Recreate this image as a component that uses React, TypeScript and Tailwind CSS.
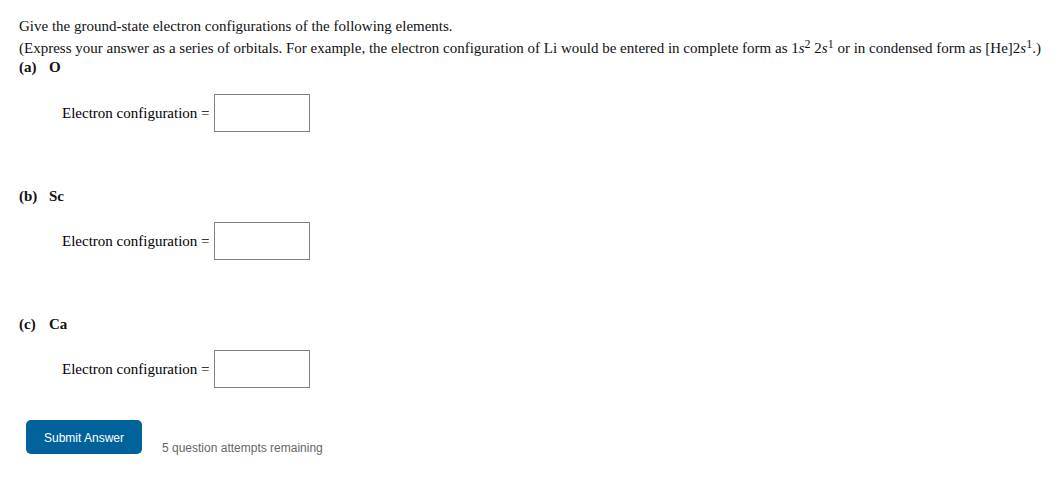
import React from "react";

const serif = { fontFamily: '"Liberation Serif", "Times New Roman", serif' };

function Answer() {
  return (
    <div className="flex items-center pl-[43px] h-[38px]">
      <span className="text-[15px] text-black">Electron configuration =</span>
      <div className="ml-[4px] w-[96px] h-[38px] border border-[#808080] bg-white" />
    </div>
  );
}

function Part({ label, el }: { label: string; el: string }) {
  return (
    <div className="flex font-bold text-[15px] leading-[16px]">
      <span className="w-[30px]">{label}</span>
      <span>{el}</span>
    </div>
  );
}

export default function App() {
  return (
    <div className="w-[1064px] h-[481px] bg-white text-[#111]" style={serif}>
      <div className="pl-[19px] pt-[16px]">
        <div className="text-[15px] leading-[21px]">Give the ground-state electron configurations of the following elements.</div>
        <div className="text-[15px] leading-[22px]">
          (Express your answer as a series of orbitals. For example, the electron configuration of Li would be entered in complete form as 1<i className="italic">s</i>
          <sup className="text-[12px] top-[-5px]">2</sup> 2<i className="italic">s</i>
          <sup className="text-[12px] top-[-5px]">1</sup> or in condensed form as [He]2<i className="italic">s</i>
          <sup className="text-[12px] top-[-5px]">1</sup>.)
        </div>
        <Part label="(a)" el="O" />
        <div className="mt-[19px]">
          <Answer />
        </div>
        <div className="mt-[56px]">
          <Part label="(b)" el="Sc" />
        </div>
        <div className="mt-[18px]">
          <Answer />
        </div>
        <div className="mt-[56px]">
          <Part label="(c)" el="Ca" />
        </div>
        <div className="mt-[18px]">
          <Answer />
        </div>
      </div>
      <div className="flex items-end pl-[26px] mt-[32px]" style={{ fontFamily: '"Liberation Sans", Arial, sans-serif' }}>
        <button className="w-[116px] h-[34px] rounded-[5px] bg-[#00629b] text-white text-[12px] pt-[1px]">
          Submit Answer
        </button>
        <span className="ml-[20px] mb-[-3px] text-[12px] text-[#666]">5 question attempts remaining</span>
      </div>
    </div>
  );
}
